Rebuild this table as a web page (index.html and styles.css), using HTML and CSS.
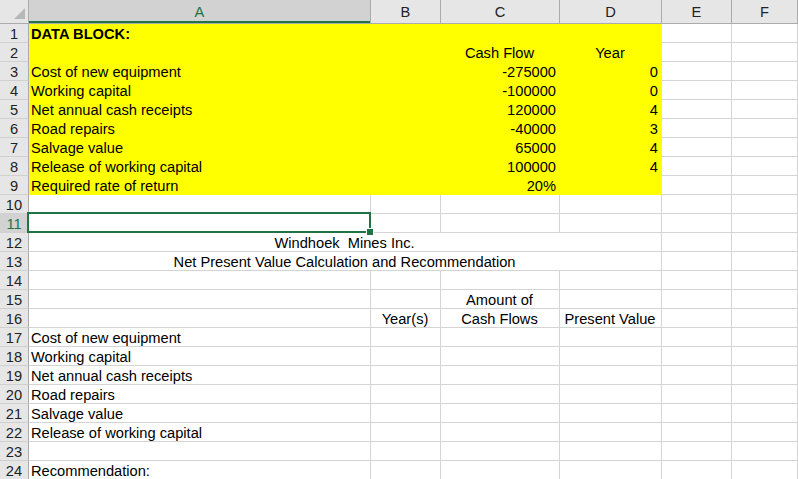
FILE: index.html
```html
<!DOCTYPE html>
<html>
<head>
<meta charset="utf-8">
<link rel="stylesheet" href="styles.css">
</head>
<body>
<div class="sheet">
  <div class="corner"><svg class="tri" width="11" height="11" viewBox="0 0 11 11"><polygon points="11,0 11,11 0,11" fill="#b8b8b8"/></svg></div>
  <div class="ch ch-sel">A</div><div class="ch">B</div><div class="ch">C</div><div class="ch">D</div><div class="ch">E</div><div class="ch">F</div>

  <div class="rh">1</div><div class="c y bold">DATA BLOCK:</div><div class="c y"></div><div class="c y"></div><div class="c y"></div><div class="c"></div><div class="c"></div>
  <div class="rh">2</div><div class="c y"></div><div class="c y"></div><div class="c y ctr">Cash Flow</div><div class="c y ctr">Year</div><div class="c"></div><div class="c"></div>
  <div class="rh">3</div><div class="c y">Cost of new equipment</div><div class="c y"></div><div class="c y num">-275000</div><div class="c y num">0</div><div class="c"></div><div class="c"></div>
  <div class="rh">4</div><div class="c y">Working capital</div><div class="c y"></div><div class="c y num">-100000</div><div class="c y num">0</div><div class="c"></div><div class="c"></div>
  <div class="rh">5</div><div class="c y">Net annual cash receipts</div><div class="c y"></div><div class="c y num">120000</div><div class="c y num">4</div><div class="c"></div><div class="c"></div>
  <div class="rh">6</div><div class="c y">Road repairs</div><div class="c y"></div><div class="c y num">-40000</div><div class="c y num">3</div><div class="c"></div><div class="c"></div>
  <div class="rh">7</div><div class="c y">Salvage value</div><div class="c y"></div><div class="c y num">65000</div><div class="c y num">4</div><div class="c"></div><div class="c"></div>
  <div class="rh">8</div><div class="c y">Release of working capital</div><div class="c y"></div><div class="c y num">100000</div><div class="c y num">4</div><div class="c"></div><div class="c"></div>
  <div class="rh">9</div><div class="c y">Required rate of return</div><div class="c y"></div><div class="c y num">20%</div><div class="c y"></div><div class="c"></div><div class="c"></div>
  <div class="rh">10</div><div class="c"></div><div class="c"></div><div class="c"></div><div class="c"></div><div class="c"></div><div class="c"></div>
  <div class="rh rh-sel">11</div><div class="c active"><span class="selbox"><span class="handle"></span></span></div><div class="c"></div><div class="c"></div><div class="c"></div><div class="c"></div><div class="c"></div>
  <div class="rh">12</div><div class="c merge ctr pre">Windhoek  Mines Inc.</div><div class="c"></div><div class="c"></div>
  <div class="rh">13</div><div class="c merge ctr">Net Present Value Calculation and Recommendation</div><div class="c"></div><div class="c"></div>
  <div class="rh">14</div><div class="c"></div><div class="c"></div><div class="c"></div><div class="c"></div><div class="c"></div><div class="c"></div>
  <div class="rh">15</div><div class="c"></div><div class="c"></div><div class="c ctr">Amount of</div><div class="c"></div><div class="c"></div><div class="c"></div>
  <div class="rh">16</div><div class="c"></div><div class="c ctr">Year(s)</div><div class="c ctr">Cash Flows</div><div class="c ctr">Present Value</div><div class="c"></div><div class="c"></div>
  <div class="rh">17</div><div class="c">Cost of new equipment</div><div class="c"></div><div class="c"></div><div class="c"></div><div class="c"></div><div class="c"></div>
  <div class="rh">18</div><div class="c">Working capital</div><div class="c"></div><div class="c"></div><div class="c"></div><div class="c"></div><div class="c"></div>
  <div class="rh">19</div><div class="c">Net annual cash receipts</div><div class="c"></div><div class="c"></div><div class="c"></div><div class="c"></div><div class="c"></div>
  <div class="rh">20</div><div class="c">Road repairs</div><div class="c"></div><div class="c"></div><div class="c"></div><div class="c"></div><div class="c"></div>
  <div class="rh">21</div><div class="c">Salvage value</div><div class="c"></div><div class="c"></div><div class="c"></div><div class="c"></div><div class="c"></div>
  <div class="rh">22</div><div class="c">Release of working capital</div><div class="c"></div><div class="c"></div><div class="c"></div><div class="c"></div><div class="c"></div>
  <div class="rh">23</div><div class="c"></div><div class="c"></div><div class="c"></div><div class="c"></div><div class="c"></div><div class="c"></div>
  <div class="rh">24</div><div class="c">Recommendation:</div><div class="c"></div><div class="c"></div><div class="c"></div><div class="c"></div><div class="c"></div>
</div>
</body>
</html>
```
FILE: styles.css
```css
html, body {
  margin: 0;
  padding: 0;
  background: #ffffff;
  overflow: hidden;
}
.sheet {
  display: grid;
  grid-template-columns: 29px 342px 70px 119px 102px 70px 1fr;
  grid-template-rows: 24px repeat(24, 19px);
  width: 798px;
  font-family: "Liberation Sans", Arial, sans-serif;
  font-size: 14.67px;
  color: #000;
}
.corner {
  background: #e6e6e6;
  border-right: 1px solid #ababab;
  border-bottom: 1px solid #ababab;
  box-sizing: border-box;
  display: flex;
  align-items: flex-end;
  justify-content: flex-end;
  padding: 0 3px 4px 0;
}
.tri { display: block; }
.ch {
  background: #e6e6e6;
  border-right: 1px solid #ababab;
  border-bottom: 1px solid #ababab;
  box-sizing: border-box;
  text-align: center;
  line-height: 24px;
  color: #222;
  font-size: 14.67px;
}
.ch-sel {
  background: #d2d2d2;
  color: #217346;
  box-shadow: inset 0 -2px 0 #217346;
}
.rh {
  background: #e6e6e6;
  border-right: 1px solid #ababab;
  border-bottom: 1px solid #d0d0d0;
  box-sizing: border-box;
  text-align: center;
  line-height: 18px;
  padding-top: 1px;
  color: #222;
}
.rh-sel {
  background: #d2d2d2;
  color: #217346;
}
.c {
  border-right: 1px solid #d4d4d4;
  border-bottom: 1px solid #d4d4d4;
  box-sizing: border-box;
  line-height: 19px;
  padding: 1px 3px 0 2px;
  white-space: nowrap;
  overflow: visible;
  position: relative;
}
.y {
  background: #ffff00;
  border-color: #ffff00;
}
.bold { font-weight: bold; }
.ctr { text-align: center; }
.num { text-align: right; }
.pre { white-space: pre; }
.merge { grid-column: span 4; }
.active { overflow: visible; }
.selbox {
  position: absolute;
  left: -2px;
  top: -2px;
  right: -1px;
  bottom: -1px;
  border: 2px solid #217346;
  z-index: 2;
}
.handle {
  position: absolute;
  right: -5px;
  bottom: -5px;
  width: 6px;
  height: 6px;
  background: #217346;
  border: 1px solid #ffffff;
}
```
